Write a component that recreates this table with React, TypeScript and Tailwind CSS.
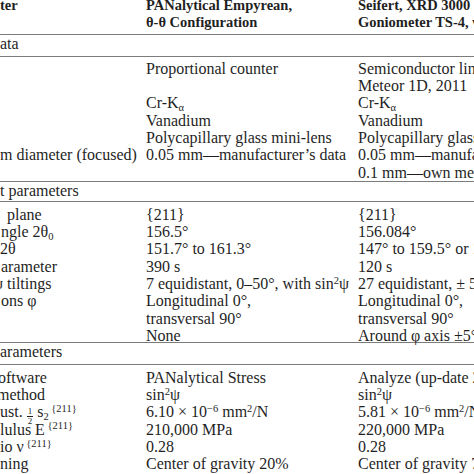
import React from "react";

type Row = {
  label?: React.ReactNode;
  mid: React.ReactNode[];
  right: React.ReactNode[];
};

const Sup = ({ children }: { children: React.ReactNode }) => (
  <sup className="text-[10.5px] leading-none">{children}</sup>
);

const Sub = ({ children }: { children: React.ReactNode }) => (
  <sub className="text-[10.5px] leading-none">{children}</sub>
);

const Half = () => (
  <span className="inline-flex flex-col items-center h-[10px] align-[3px] text-[9px] leading-[9px] mx-[4px]">
    <span className="border-b border-current px-[1px]">1</span>
    <span>2</span>
  </span>
);

const Idx = () => <Sup>&nbsp;{"{211}"}</Sup>;

const sin2psi = (
  <>
    sin<Sup>2</Sup>ψ
  </>
);

const dataRows: Row[] = [
  { mid: ["Proportional counter"], right: ["Semiconductor line detector", "Meteor 1D, 2011"] },
  {
    mid: [<>Cr-K<Sub>α</Sub></>],
    right: [<>Cr-K<Sub>α</Sub></>],
  },
  { mid: ["Vanadium"], right: ["Vanadium"] },
  { mid: ["Polycapillary glass mini-lens"], right: ["Polycapillary glass mini-lens"] },
  {
    label: "m diameter (focused)",
    mid: ["0.05 mm—manufacturer’s data"],
    right: ["0.05 mm—manufacturer’s data", "0.1 mm—own measurement"],
  },
];

const paramRows: Row[] = [
  { label: <span className="ml-[7px]">plane</span>, mid: ["{211}"], right: ["{211}"] },
  {
    label: <span className="ml-[1px]">ngle 2θ<Sub>0</Sub></span>,
    mid: ["156.5°"],
    right: ["156.084°"],
  },
  { label: "2θ", mid: ["151.7° to 161.3°"], right: ["147° to 159.5° or 147° to 165°"] },
  { label: <span className="ml-[1px]">arameter</span>, mid: ["390 s"], right: ["120 s"] },
  {
    label: <span className="ml-[-7px]">ψ tiltings</span>,
    mid: [<>7 equidistant, 0–50°, with {sin2psi}</>],
    right: [<>27 equidistant, ± 50°, with {sin2psi}</>],
  },
  {
    label: <span className="ml-[1px]">ons φ</span>,
    mid: ["Longitudinal 0°,", "transversal 90°"],
    right: ["Longitudinal 0°,", "transversal 90°"],
  },
  { mid: ["None"], right: ["Around φ axis ±5°"] },
];

const evalRows: Row[] = [
  { label: <span className="ml-[-2px]">oftware</span>, mid: ["PANalytical Stress"], right: ["Analyze (up-date 2013)"] },
  { label: <span className="ml-[-3px]">method</span>, mid: [sin2psi], right: [sin2psi] },
  {
    label: (
      <>
        ust.
        <Half />s<Sub>2</Sub>
        <Idx />
      </>
    ),
    mid: [<>6.10 × 10<Sup>−6</Sup> mm<Sup>2</Sup>/N</>],
    right: [<>5.81 × 10<Sup>−6</Sup> mm<Sup>2</Sup>/N</>],
  },
  {
    label: (
      <>
        lulus E<Idx />
      </>
    ),
    mid: ["210,000 MPa"],
    right: ["220,000 MPa"],
  },
  {
    label: (
      <>
        io ν<Idx />
      </>
    ),
    mid: ["0.28"],
    right: ["0.28"],
  },
  { label: "ning", mid: ["Center of gravity 20%"], right: ["Center of gravity 70%"] },
];

function Lines({ items }: { items: React.ReactNode[] }) {
  return (
    <>
      {items.map((t, i) => (
        <div key={i} className="h-[17.3px]">
          {t}
        </div>
      ))}
    </>
  );
}

function Body({ rows, className }: { rows: Row[]; className: string }) {
  return (
    <div className={className}>
      {rows.map((r, i) => (
        <div key={i} className="flex">
          <div className="w-[146px] shrink-0 h-[17.3px]">{r.label}</div>
          <div className="w-[212px] shrink-0">
            <Lines items={r.mid} />
          </div>
          <div className="flex-1">
            <Lines items={r.right} />
          </div>
        </div>
      ))}
    </div>
  );
}

function Section({ title, className }: { title: string; className: string }) {
  return (
    <div className={`border-y-[1.5px] border-[#7c7c7c] ${className}`}>
      <div className="h-[17.3px]">{title}</div>
    </div>
  );
}

export default function App() {
  return (
    <div className="w-[474px] h-[474px] overflow-hidden bg-white">
      <div
        className="w-[640px] whitespace-nowrap text-[16px] leading-[17.3px] text-[#1f1f1f]"
        style={{ fontFamily: '"Liberation Serif", "Times New Roman", serif' }}
      >
        <div className="flex font-bold text-[14.5px] -mt-[3px] pb-[2px]">
          <div className="w-[146px] shrink-0 h-[17.3px]">ter</div>
          <div className="w-[212px] shrink-0">
            <div className="h-[17.3px]">PANalytical Empyrean,</div>
            <div className="h-[17.3px]">θ-θ Configuration</div>
          </div>
          <div className="flex-1">
            <div className="h-[17.3px]">Seifert, XRD 3000 PTS,</div>
            <div className="h-[17.3px]">Goniometer TS-4, with</div>
          </div>
        </div>
        <Section title="ata" className="pb-[4px]" />
        <Body rows={dataRows} className="pt-[3px]" />
        <Section title="t parameters" className="pb-[2px]" />
        <Body rows={paramRows} className="pt-[3.5px] -mb-[2px]" />
        <Section title="arameters" className="pb-[4px]" />
        <Body rows={evalRows} className="pt-[3.3px]" />
      </div>
    </div>
  );
}
